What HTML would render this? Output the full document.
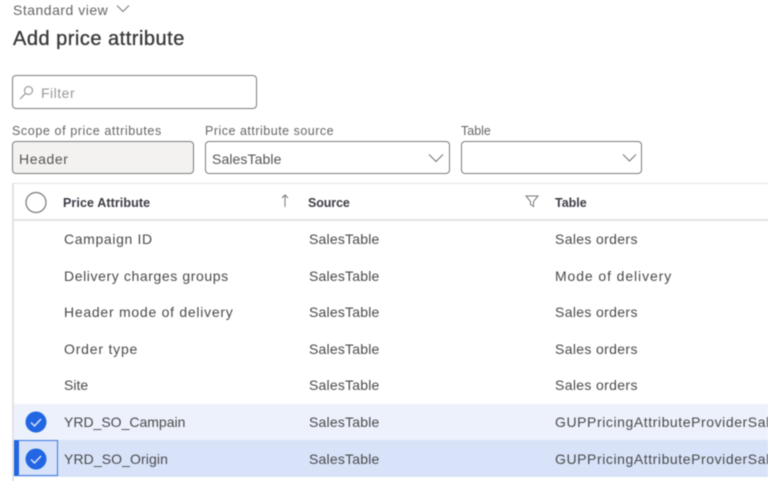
<!DOCTYPE html>
<html><head><meta charset="utf-8">
<style>
html,body{margin:0;padding:0;background:#fff}
#p{position:relative;width:768px;height:481px;overflow:hidden;background:#fff;font-family:"Liberation Sans",sans-serif;color:#4a4a4a;filter:blur(.45px)}
.t{position:absolute;white-space:nowrap;font-size:14px;line-height:18px}
.l{font-size:12.5px;color:#666;line-height:16px}
.h{font-size:12.5px;font-weight:bold;color:#3c3c46;line-height:16px}
.b{position:absolute;box-sizing:border-box;border:1.5px solid #7d7d7d;border-radius:4px;background:#fff}
.r{position:absolute;left:14px;width:754px;height:37px}
.s{letter-spacing:.2px}
.o{letter-spacing:.35px}
.g{letter-spacing:.57px}
svg{position:absolute;overflow:visible}
</style></head><body>
<div id="p">
<div class="t" style="left:13px;top:1px;font-size:14px;color:#666;letter-spacing:.5px">Standard view</div>
<svg style="left:116px;top:4px" width="14" height="9"><path d="M1 1.5L7 7.5L13 1.5" fill="none" stroke="#777" stroke-width="1"/></svg>
<div class="t" style="left:13px;top:27px;font-size:20px;line-height:24px;color:#3a3a3a;letter-spacing:.5px;-webkit-text-stroke:.35px #3a3a3a">Add price attribute</div>

<div class="b" style="left:12px;top:75px;width:245px;height:34px"></div>
<svg style="left:19px;top:85px" width="16" height="15"><circle cx="9.5" cy="5.5" r="4" fill="none" stroke="#888" stroke-width="1"/><path d="M6.5 8.5L1 14" stroke="#888" stroke-width="1"/></svg>
<div class="t" style="left:41px;top:84px;color:#999;letter-spacing:.5px">Filter</div>

<div class="t l" style="left:12px;top:123px;letter-spacing:.6px">Scope of price attributes</div>
<div class="t l" style="left:205px;top:123px;letter-spacing:.5px">Price attribute source</div>
<div class="t l" style="left:461px;top:123px">Table</div>

<div class="b" style="left:12px;top:141px;width:182px;height:33px;background:#f3f2f1"></div>
<div class="t" style="left:19px;top:150px;color:#555;letter-spacing:.6px">Header</div>
<div class="b" style="left:205px;top:141px;width:245px;height:33px"></div>
<div class="t" style="left:212px;top:150px;color:#555;letter-spacing:.1px">SalesTable</div>
<svg style="left:428px;top:153px" width="16" height="10"><path d="M1 1.5L8 8.5L15 1.5" fill="none" stroke="#777" stroke-width="1.1"/></svg>
<div class="b" style="left:461px;top:141px;width:181px;height:33px"></div>
<svg style="left:622px;top:153px" width="15" height="10"><path d="M1 1.5L7.5 8L14 1.5" fill="none" stroke="#777" stroke-width="1.1"/></svg>

<div style="position:absolute;left:12px;top:183px;width:756px;height:1px;background:#e3e3e3"></div>
<div style="position:absolute;left:12px;top:219px;width:756px;height:1.5px;background:#e3e3e3"></div>
<div style="position:absolute;left:12px;top:183px;width:1.5px;height:298px;background:#e3e3e3"></div>

<svg style="left:25px;top:192px" width="22" height="22"><circle cx="11" cy="10.5" r="10" fill="#fff" stroke="#777" stroke-width="1.2"/></svg>
<div class="t h" style="left:63px;top:195px;letter-spacing:.1px">Price Attribute</div>
<svg style="left:280px;top:194px" width="10" height="14"><path d="M5 13V1M2 4L5 1L8 4" fill="none" stroke="#777" stroke-width="1"/></svg>
<div class="t h" style="left:308px;top:195px;letter-spacing:-.1px">Source</div>
<svg style="left:525px;top:195px" width="14" height="13"><path d="M1 1H13L8.5 6.5V11.5L5.5 9.5V6.5Z" fill="none" stroke="#777" stroke-width="1"/></svg>
<div class="t h" style="left:555px;top:195px">Table</div>

<div class="r" style="top:404px;background:#ecf1fc"></div>
<div class="r" style="top:440px;background:#d8e3f9"></div>
<div style="position:absolute;left:14px;top:440px;width:44px;height:36px;box-sizing:border-box;border:1px solid #3a78e0;border-left:5px solid #2266e3"></div>

<div class="t" style="left:64px;top:230px;letter-spacing:.64px">Campaign ID</div>
<div class="t" style="left:64px;top:267px;letter-spacing:.6px">Delivery charges groups</div>
<div class="t" style="left:64px;top:303px;letter-spacing:.74px">Header mode of delivery</div>
<div class="t" style="left:64px;top:340px;letter-spacing:.8px">Order type</div>
<div class="t" style="left:64px;top:376px">Site</div>
<div class="t" style="left:64px;top:413px">YRD_SO_Campain</div>
<div class="t" style="left:64px;top:450px;letter-spacing:.1px">YRD_SO_Origin</div>

<div class="t s" style="left:309px;top:230px">SalesTable</div>
<div class="t s" style="left:309px;top:267px">SalesTable</div>
<div class="t s" style="left:309px;top:303px">SalesTable</div>
<div class="t s" style="left:309px;top:340px">SalesTable</div>
<div class="t s" style="left:309px;top:376px">SalesTable</div>
<div class="t s" style="left:309px;top:413px">SalesTable</div>
<div class="t s" style="left:309px;top:450px">SalesTable</div>

<div class="t o" style="left:555px;top:230px">Sales orders</div>
<div class="t" style="left:555px;top:267px;letter-spacing:.9px">Mode of delivery</div>
<div class="t o" style="left:555px;top:303px">Sales orders</div>
<div class="t o" style="left:555px;top:340px">Sales orders</div>
<div class="t o" style="left:555px;top:376px">Sales orders</div>
<div class="t g" style="left:555px;top:413px">GUPPricingAttributeProviderSalesTable</div>
<div class="t g" style="left:555px;top:450px">GUPPricingAttributeProviderSalesTable</div>

<svg style="left:25px;top:411px" width="22" height="22"><circle cx="11" cy="11" r="10.5" fill="#2266e3"/><path d="M6 11.5L9.5 15L16 8" fill="none" stroke="#dfe9fb" stroke-width="1.4"/></svg>
<svg style="left:25px;top:448px" width="22" height="22"><circle cx="11" cy="11" r="10.5" fill="#2266e3"/><path d="M6 11.5L9.5 15L16 8" fill="none" stroke="#dfe9fb" stroke-width="1.4"/></svg>
</div>
</body></html>
